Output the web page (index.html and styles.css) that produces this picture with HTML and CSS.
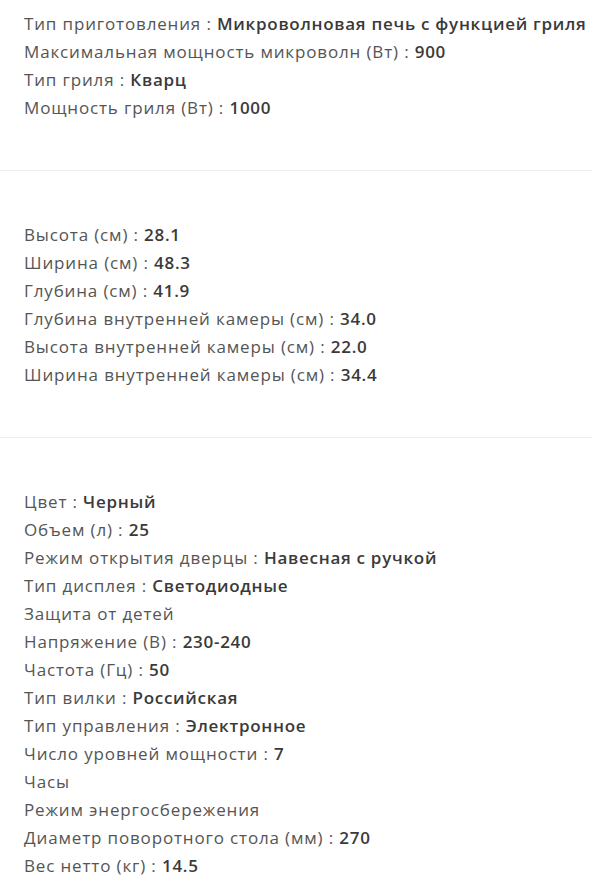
FILE: index.html
```html
<!DOCTYPE html>
<html lang="ru">
<head>
<meta charset="utf-8">
<link rel="stylesheet" href="styles.css">
</head>
<body>
<div class="specs">
  <section class="group first">
    <p class="row">Тип приготовления : <b>Микроволновая печь с функцией гриля</b></p>
    <p class="row">Максимальная мощность микроволн (Вт) : <b>900</b></p>
    <p class="row">Тип гриля : <b>Кварц</b></p>
    <p class="row">Мощность гриля (Вт) : <b>1000</b></p>
  </section>
  <section class="group">
    <p class="row">Высота (см) : <b>28.1</b></p>
    <p class="row">Ширина (см) : <b>48.3</b></p>
    <p class="row">Глубина (см) : <b>41.9</b></p>
    <p class="row">Глубина внутренней камеры (см) : <b>34.0</b></p>
    <p class="row">Высота внутренней камеры (см) : <b>22.0</b></p>
    <p class="row">Ширина внутренней камеры (см) : <b>34.4</b></p>
  </section>
  <section class="group last">
    <p class="row">Цвет : <b>Черный</b></p>
    <p class="row">Объем (л) : <b>25</b></p>
    <p class="row">Режим открытия дверцы : <b>Навесная с ручкой</b></p>
    <p class="row">Тип дисплея : <b>Светодиодные</b></p>
    <p class="row">Защита от детей</p>
    <p class="row">Напряжение (В) : <b>230-240</b></p>
    <p class="row">Частота (Гц) : <b>50</b></p>
    <p class="row">Тип вилки : <b>Российская</b></p>
    <p class="row">Тип управления : <b>Электронное</b></p>
    <p class="row">Число уровней мощности : <b>7</b></p>
    <p class="row">Часы</p>
    <p class="row">Режим энергосбережения</p>
    <p class="row">Диаметр поворотного стола (мм) : <b>270</b></p>
    <p class="row">Вес нетто (кг) : <b>14.5</b></p>
  </section>
</div>
</body>
</html>
```

FILE: styles.css
```css
html, body {
  margin: 0;
  padding: 0;
  background: #fff;
}
body {
  font-family: "Open Sans", "Noto Sans", sans-serif;
  font-size: 17px;
  color: #555555;
  overflow: hidden;
}
.specs {
  display: flex;
  flex-direction: column;
}
.group {
  padding: 50px 24px 48px;
  border-bottom: 1px solid #eeeeee;
}
.group.first {
  padding-top: 10px;
}
.group.last {
  border-bottom: none;
}
.row {
  margin: 0;
  line-height: 28px;
  white-space: nowrap;
  letter-spacing: 0.85px;
}
.row b {
  font-weight: 600;
  color: #3a3a3a;
  letter-spacing: 0.72px;
}
```
